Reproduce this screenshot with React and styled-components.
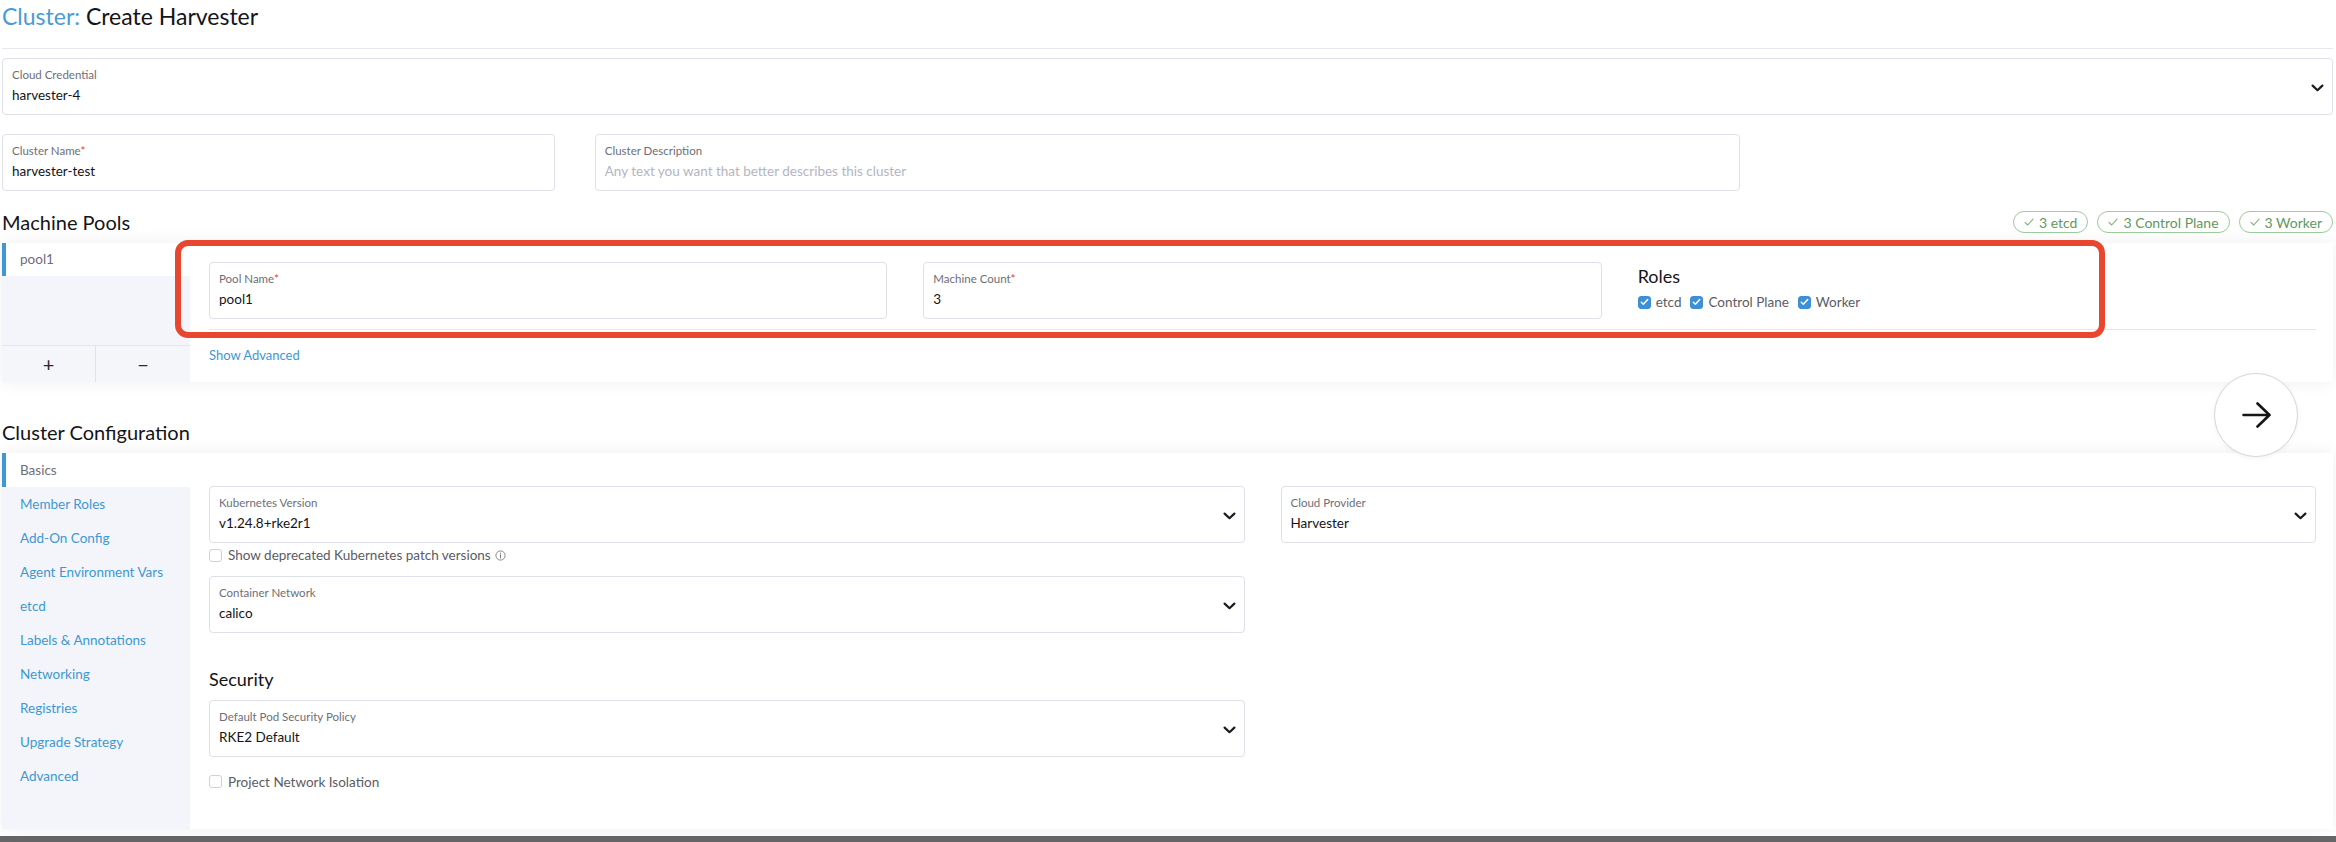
import React from "react";
import styled, { createGlobalStyle } from "styled-components";

const GlobalStyle = createGlobalStyle`
  html, body { margin: 0; padding: 0; background: #ffffff; }
  body {
    font-family: Lato, "Noto Sans", "Liberation Sans", sans-serif;
    color: #141419;
    width: 2336px;
    height: 842px;
    overflow: hidden;
  }
  * { box-sizing: border-box; }
`;

const Page = styled.div`
  display: flex;
  flex-direction: column;
  height: 842px;
  padding: 0 3px 0 2px;
`;

const Header = styled.header`
  height: 49px;
  border-bottom: 1px solid #e7e8ef;
  display: flex;
  align-items: flex-start;
`;

const Title = styled.h1`
  margin: 0;
  font-size: 23px;
  line-height: 32px;
  font-weight: 400;
  color: #141419;
  span { color: #4a9ad6; }
`;

const FieldBox = styled.div`
  height: 57px;
  border: 1px solid #dfe0e8;
  border-radius: 4px;
  background: #ffffff;
  display: flex;
  align-items: center;
  grid-column: ${(p) => (p.$span ? `span ${p.$span}` : "auto")};
`;

const FieldContent = styled.div`
  flex: 1;
  align-self: stretch;
  display: flex;
  flex-direction: column;
  padding: 8px 9px 0 9px;
  min-width: 0;
`;

const Label = styled.div`
  font-size: 11.5px;
  line-height: 16px;
  color: #6e6e78;
  em { font-style: normal; color: #e0413a; }
`;

const Value = styled.div`
  margin-top: 2px;
  font-size: 13.5px;
  line-height: 20px;
  color: ${(p) => (p.$placeholder ? "#b4b5c1" : "#141419")};
`;

const ChevronWrap = styled.span`
  display: flex;
  margin: 3px 8px 0 0;
`;

const Chevron = () => (
  <ChevronWrap>
    <svg width="13" height="8" viewBox="0 0 13 8">
      <path d="M1.6 1.6 6.5 6.2l4.9-4.6" fill="none" stroke="#1b1b1f" strokeWidth="2.2" strokeLinecap="round" strokeLinejoin="round" />
    </svg>
  </ChevronWrap>
);

const Field = ({ label, required, value, placeholder, select, span, className }) => (
  <FieldBox $span={span} className={className}>
    <FieldContent>
      <Label>
        {label}
        {required && <em>*</em>}
      </Label>
      <Value $placeholder={!!placeholder}>{value || placeholder}</Value>
    </FieldContent>
    {select && <Chevron />}
  </FieldBox>
);

const CredentialField = styled(Field)`
  margin-top: 9px;
`;

const Grid12 = styled.div`
  margin-top: 19px;
  display: grid;
  grid-template-columns: repeat(12, 1fr);
  column-gap: 40px;
`;

const SectionHeader = styled.div`
  display: flex;
  align-items: center;
  justify-content: space-between;
  height: 24px;
  margin-top: ${(p) => p.$top}px;
`;

const SectionTitle = styled.h2`
  margin: 0;
  font-size: 20px;
  line-height: 24px;
  font-weight: 400;
  color: #141419;
`;

const Badges = styled.div`
  display: flex;
  gap: 9px;
`;

const Badge = styled.span`
  height: 22px;
  display: inline-flex;
  align-items: center;
  gap: 5px;
  padding: 0 10px 0 10px;
  border: 1px solid #9ccb9c;
  border-radius: 11px;
  font-size: 14px;
  color: #5f985f;
  white-space: nowrap;
`;

const BadgeCheck = () => (
  <svg width="10" height="8" viewBox="0 0 10 8">
    <path d="M1 4.3 3.7 7 9 1.2" fill="none" stroke="#7cb47c" strokeWidth="1.1" strokeLinecap="round" strokeLinejoin="round" />
  </svg>
);

const Section = styled.section`
  position: relative;
  display: flex;
  height: ${(p) => p.$height}px;
  margin-top: 9px;
  box-shadow: 0 0 16px rgba(30, 30, 60, 0.07);
`;

const SideNav = styled.nav`
  width: 188px;
  flex: none;
  display: flex;
  flex-direction: column;
  background: #f4f5fa;
`;

const SideItem = styled.div`
  height: ${(p) => p.$h || 34}px;
  line-height: ${(p) => p.$h || 34}px;
  padding-left: 14px;
  border-left: 4px solid ${(p) => (p.$active ? "#3d98d3" : "transparent")};
  background: ${(p) => (p.$active ? "#ffffff" : "transparent")};
  font-size: 13.5px;
  color: ${(p) => (p.$active ? "#6e6e78" : "#3d98d3")};
  white-space: nowrap;
`;

const SideFill = styled.div`
  flex: 1;
`;

const SideButtons = styled.div`
  height: 37px;
  display: grid;
  grid-template-columns: 1fr 1fr;
  border-top: 1px solid #e5e6ee;
`;

const SideButton = styled.button`
  border: none;
  border-right: ${(p) => (p.$divider ? "1px solid #e1e2ea" : "none")};
  background: #f5f6fa;
  font-family: inherit;
  font-size: 20px;
  line-height: 1;
  color: #2a2a30;
  padding: 0;
`;

const Panel = styled.div`
  flex: 1;
  background: #ffffff;
  padding: ${(p) => p.$top}px 17px 0 19px;
  display: flex;
  flex-direction: column;
`;

const PoolRow = styled.div`
  display: grid;
  grid-template-columns: repeat(3, 1fr);
  column-gap: 36px;
  padding-bottom: 10px;
  border-bottom: 1px solid #e6e7ee;
`;

const Roles = styled.div`
  display: flex;
  flex-direction: column;
`;

const RolesTitle = styled.h3`
  margin: 3px 0 0;
  font-size: 18px;
  line-height: 22px;
  font-weight: 400;
  color: #141419;
`;

const CheckRow = styled.div`
  display: flex;
  align-items: center;
  gap: 9px;
  margin-top: 6px;
`;

const CheckItem = styled.label`
  display: inline-flex;
  align-items: center;
  gap: ${(p) => p.$gap || 5}px;
  font-size: 13.5px;
  line-height: 18px;
  color: #5b5b64;
  margin-top: ${(p) => p.$top || 0}px;
`;

const Box = styled.span`
  width: 13px;
  height: 13px;
  flex: none;
  border-radius: 3px;
  display: inline-flex;
  align-items: center;
  justify-content: center;
  background: ${(p) => (p.$checked ? "#3d8fd6" : "#ffffff")};
  border: 1px solid ${(p) => (p.$checked ? "#3d8fd6" : "#cfd0d8")};
`;

const CheckBox = ({ checked }) => (
  <Box $checked={checked}>
    {checked && (
      <svg width="9" height="8" viewBox="0 0 9 8">
        <path d="M1.3 4.2 3.4 6.3 7.7 1.6" fill="none" stroke="#ffffff" strokeWidth="1.5" strokeLinecap="round" strokeLinejoin="round" />
      </svg>
    )}
  </Box>
);

const LinkText = styled.div`
  margin-top: 17px;
  font-size: 13px;
  line-height: 16px;
  color: #3d98d3;
`;

const Highlight = styled.div`
  position: absolute;
  left: 173px;
  top: -3px;
  width: 1930px;
  height: 98px;
  border: 6px solid #e8462e;
  border-radius: 13px;
  pointer-events: none;
`;

const NextButton = styled.button`
  position: absolute;
  right: 35px;
  top: 130px;
  width: 84px;
  height: 84px;
  border-radius: 50%;
  border: 1px solid #d7d7db;
  background: #ffffff;
  box-shadow: 0 1px 5px rgba(0, 0, 0, 0.06);
  display: flex;
  align-items: center;
  justify-content: center;
  padding: 0;
  z-index: 2;
`;

const TwoCol = styled.div`
  display: grid;
  grid-template-columns: 1fr 1fr;
  column-gap: 36px;
  align-items: start;
`;

const Stack = styled.div`
  display: flex;
  flex-direction: column;
`;

const SpacedField = styled(Field)`
  margin-top: ${(p) => p.$top}px;
`;

const SubTitle = styled.h3`
  margin: 35px 0 0;
  font-size: 18px;
  line-height: 22px;
  font-weight: 400;
  color: #141419;
`;

const InfoWrap = styled.span`
  display: inline-flex;
  margin-left: -2px;
`;

const InfoIcon = () => (
  <InfoWrap>
    <svg width="11" height="11" viewBox="0 0 11 11">
      <circle cx="5.5" cy="5.5" r="4.6" fill="none" stroke="#7a7a84" strokeWidth="0.9" />
      <path d="M5.5 4.8v3.2" stroke="#7a7a84" strokeWidth="1" strokeLinecap="round" />
      <circle cx="5.5" cy="3.2" r="0.6" fill="#7a7a84" />
    </svg>
  </InfoWrap>
);

const FooterBar = styled.div`
  margin: auto -3px 0 -2px;
  height: 6.5px;
  background: #666668;
`;

const navItems = [
  "Member Roles",
  "Add-On Config",
  "Agent Environment Vars",
  "etcd",
  "Labels & Annotations",
  "Networking",
  "Registries",
  "Upgrade Strategy",
  "Advanced",
];

export default function App() {
  return (
    <>
      <GlobalStyle />
      <Page>
        <Header>
          <Title>
            <span>Cluster:</span> Create Harvester
          </Title>
        </Header>

        <CredentialField label="Cloud Credential" value="harvester-4" select />

        <Grid12>
          <Field span={3} label="Cluster Name" required value="harvester-test" />
          <Field span={6} label="Cluster Description" placeholder="Any text you want that better describes this cluster" />
        </Grid12>

        <SectionHeader $top={19}>
          <SectionTitle>Machine Pools</SectionTitle>
          <Badges>
            <Badge><BadgeCheck />3 etcd</Badge>
            <Badge><BadgeCheck />3 Control Plane</Badge>
            <Badge><BadgeCheck />3 Worker</Badge>
          </Badges>
        </SectionHeader>

        <Section $height={138.5}>
          <SideNav>
            <SideItem $active $h={33}>pool1</SideItem>
            <SideFill />
            <SideButtons>
              <SideButton $divider>+</SideButton>
              <SideButton>−</SideButton>
            </SideButtons>
          </SideNav>
          <Panel $top={19}>
            <PoolRow>
              <Field label="Pool Name" required value="pool1" />
              <Field label="Machine Count" required value="3" />
              <Roles>
                <RolesTitle>Roles</RolesTitle>
                <CheckRow>
                  <CheckItem><CheckBox checked />etcd</CheckItem>
                  <CheckItem><CheckBox checked />Control Plane</CheckItem>
                  <CheckItem><CheckBox checked />Worker</CheckItem>
                </CheckRow>
              </Roles>
            </PoolRow>
            <LinkText>Show Advanced</LinkText>
          </Panel>
          <Highlight />
          <NextButton aria-label="Next">
            <svg width="29" height="26" viewBox="0 0 29 26">
              <path d="M1.5 13h26M15.5 1.5 27.5 13 15.5 24.5" fill="none" stroke="#16161a" strokeWidth="2.6" strokeLinecap="round" strokeLinejoin="round" />
            </svg>
          </NextButton>
        </Section>

        <SectionHeader $top={38}>
          <SectionTitle>Cluster Configuration</SectionTitle>
        </SectionHeader>

        <Section $height={376}>
          <SideNav>
            <SideItem $active>Basics</SideItem>
            {navItems.map((n) => (
              <SideItem key={n}>{n}</SideItem>
            ))}
          </SideNav>
          <Panel $top={33.5}>
            <TwoCol>
              <Stack>
                <Field label="Kubernetes Version" value="v1.24.8+rke2r1" select />
                <CheckItem $top={3} $gap={6}>
                  <CheckBox />
                  Show deprecated Kubernetes patch versions <InfoIcon />
                </CheckItem>
                <SpacedField $top={12} label="Container Network" value="calico" select />
              </Stack>
              <Field label="Cloud Provider" value="Harvester" select />
            </TwoCol>
            <SubTitle>Security</SubTitle>
            <TwoCol>
              <Stack>
                <SpacedField $top={9.5} label="Default Pod Security Policy" value="RKE2 Default" select />
                <CheckItem $top={16} $gap={6}>
                  <CheckBox />
                  Project Network Isolation
                </CheckItem>
              </Stack>
            </TwoCol>
          </Panel>
        </Section>

        <FooterBar />
      </Page>
    </>
  );
}
